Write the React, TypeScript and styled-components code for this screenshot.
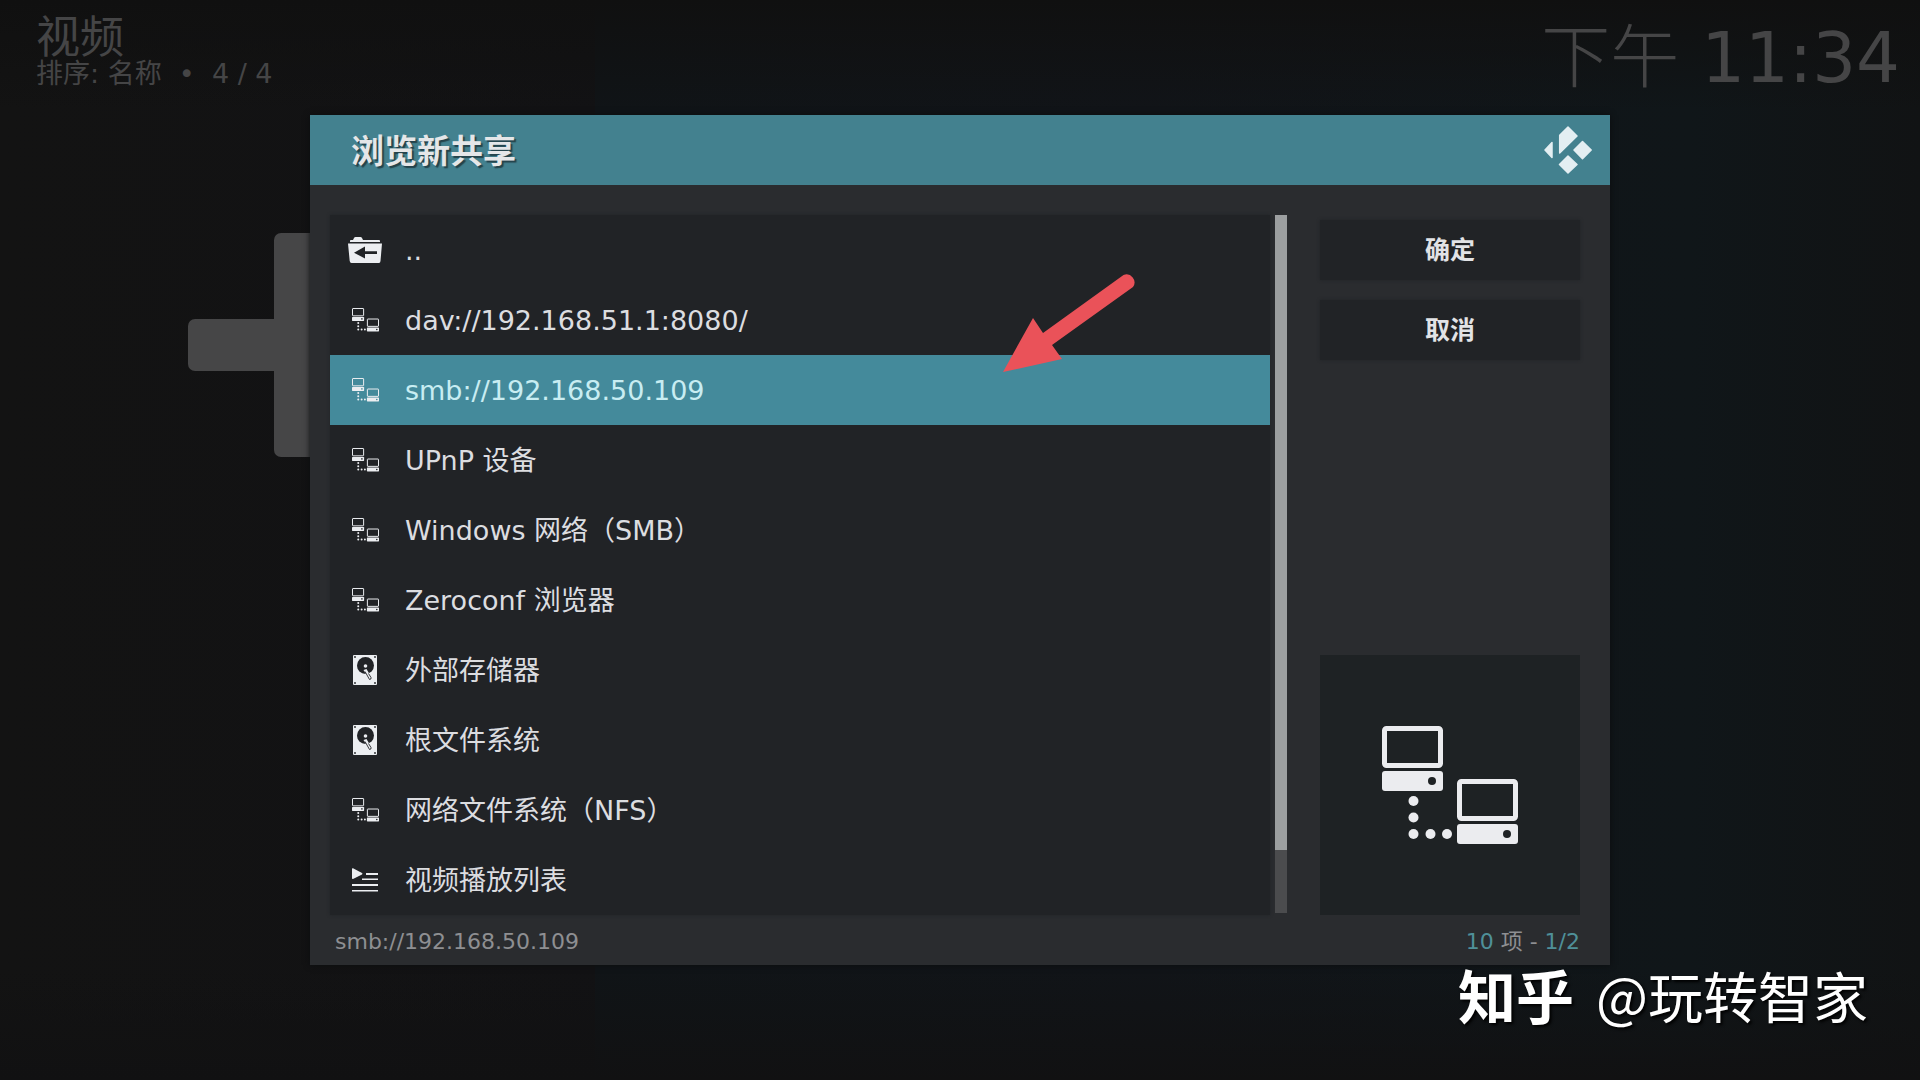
import React from 'react';
import styled, { createGlobalStyle } from 'styled-components';

const GlobalStyle = createGlobalStyle`
  *, *::before, *::after { box-sizing: border-box; }
  body {
    margin: 0;
    background: #121214;
    color: #dedfe1;
    font-family: "DejaVu Sans", "Noto Sans CJK SC", sans-serif;
  }
  button { font: inherit; color: inherit; border: 0; cursor: pointer; }
`;

const Screen = styled.div`
  position: relative;
  min-height: 100vh;
  overflow: hidden;
  background:
    linear-gradient(to bottom, #101010 0, #10101000 110px),
    linear-gradient(to top, #111112 0, #11111200 110px),
    linear-gradient(to right, #131313 0, #121214 31%, #101417 31%, #111418 60%, #101619 88%, #111314 100%);
`;

const TopBar = styled.header`
  display: flex;
  justify-content: space-between;
  align-items: flex-start;
  height: 100px;
  padding: 10px 20px 0 36px;
  color: #454546;
`;

const SectionTitle = styled.h1`
  margin: 0;
  padding-top: 4px;
  font-size: 44px;
  line-height: 48px;
  font-weight: 400;
`;

const SortInfo = styled.p`
  margin: 0;
  font-size: 27px;
  line-height: 24px;
  white-space: pre;
`;

const Clock = styled.time`
  font-size: 69px;
  line-height: 96px;
`;

const DayPeriod = styled.span`
  font-weight: 300;
`;

const Backdrop = styled.main`
  padding: 133px 188px 0;
`;

const Overlay = styled.div`
  position: absolute;
  inset: 0;
  padding: 115px 310px;
`;

const Dialog = styled.section`
  background: #2a2c2f;
  box-shadow: 0 0 6px #0b0d0f;
`;

const DialogHeader = styled.header`
  display: flex;
  align-items: center;
  justify-content: space-between;
  height: 70px;
  padding: 0 18px 0 41px;
  background: #43818f;
`;

const DialogTitle = styled.h2`
  margin: 0;
  padding-top: 4px;
  font-size: 33px;
  line-height: 66px;
  font-weight: 700;
  color: #e4e6e8;
  text-shadow: 2px 2px 1px #24434b;
`;

const DialogBody = styled.div`
  display: grid;
  grid-template-columns: minmax(0, 1fr) 50px 260px;
  padding: 30px 30px 0 20px;
`;

const List = styled.ul`
  margin: 0;
  padding: 0;
  list-style: none;
  background: #212326;
  box-shadow: 0 0 3px #212326;
`;

const Row = styled.button<{ $selected?: boolean }>`
  display: flex;
  align-items: center;
  gap: 20px;
  width: 100%;
  height: 70px;
  padding: 0 15px;
  text-align: left;
  font-size: 27px;
  line-height: 68px;
  background: ${(p) => (p.$selected ? '#448a9b' : 'transparent')};
  color: ${(p) => (p.$selected ? '#c8edf2' : '#dcdde0')};
`;

const RowLabel = styled.span`
  padding-top: 2px;
`;

const IconSlot = styled.span`
  display: flex;
  justify-content: center;
  align-items: center;
  width: 40px;
  height: 40px;
  color: #eceef1;
`;

const ScrollTrack = styled.div`
  width: 12px;
  margin: 0 0 2px 5px;
  background: #4b4c4e;
`;

const ScrollThumb = styled.div`
  height: 91%;
  background: #9c9fa0;
`;

const Side = styled.aside`
  display: flex;
  flex-direction: column;
  gap: 20px;
  padding-top: 5px;
`;

const ActionButton = styled.button`
  height: 60px;
  padding: 2px 0 0;
  background: #212326;
  box-shadow: 0 0 3px #212326;
  font-size: 25px;
  line-height: 58px;
  font-weight: 700;
  color: #e2e3e6;
`;

const Preview = styled.div`
  display: grid;
  place-items: center;
  height: 260px;
  margin-top: auto;
  background: #1e2224;
  color: #ebecef;
`;

const DialogFooter = styled.footer`
  display: flex;
  justify-content: space-between;
  padding: 4px 30px 0 25px;
  height: 50px;
  font-size: 22px;
  line-height: 46px;
  color: #8e8f92;
`;

const Accent = styled.span`
  color: #4f9099;
`;

const Pointer = styled.svg`
  position: absolute;
  top: 270px;
  left: 1000px;
`;

const Watermark = styled.div`
  position: absolute;
  right: 52px;
  bottom: 58px;
  display: flex;
  align-items: center;
  gap: 22px;
  font-family: "Noto Sans CJK SC", sans-serif;
  font-size: 55px;
  line-height: 56px;
  color: #ffffff;
  text-shadow: 2px 2px 3px #000000;
`;

const WatermarkBrand = styled.span`
  font-size: 58px;
  font-weight: 700;
`;

const NetworkIcon = ({ width, hole }: { width: number; hole: string }) => (
  <svg width={width} viewBox="0 0 136 118" fill="currentColor" aria-hidden="true">
    {[[0, 0], [75, 53]].map(([x, y]) => (
      <g key={x} transform={`translate(${x} ${y})`}>
        <rect x="2.5" y="2.5" width="56" height="37" rx="2" fill="none" stroke="currentColor" strokeWidth="5" />
        <rect y="45" width="61" height="20" rx="3" />
        <circle cx="50" cy="55" r="4" fill={hole} />
      </g>
    ))}
    {[[31.5, 75], [31.5, 91.5], [31.5, 108], [48.5, 108], [65, 108]].map(([x, y]) => (
      <circle key={`${x}-${y}`} cx={x} cy={y} r="5" />
    ))}
  </svg>
);

const FolderUpIcon = () => (
  <svg width="34" height="26" viewBox="0 0 34 26" fill="currentColor" aria-hidden="true">
    <path d="M2 5V3.5Q2 3 3 3H5L6 1Q6.5 0 7.500 0H12.500Q13.500 0 14 1L15 3H31Q32 3 32 4V5Z" />
    <path
      fillRule="evenodd"
      d="M0 6.500H34L32.500 24Q32.300 26 31 26H3.500Q2 26 1.700 24ZM6 15.700L17 9.500V14.300H29V17H17V21.500Z"
    />
  </svg>
);

const DriveIcon = ({ hole }: { hole: string }) => (
  <svg width="24" height="30" viewBox="0 0 24 30" aria-hidden="true">
    <rect width="24" height="30" rx="1" fill="currentColor" />
    <circle cx="12.500" cy="10.500" r="8.500" fill={hole} />
    <circle cx="12.500" cy="11" r="1.800" fill="currentColor" />
    <path d="M10.500 15L13.500 14L18.500 22.500Q18.500 25 16.500 25Z" fill="currentColor" />
    <path d="M12 16.500L16.500 24.500Q18.500 24.500 18 22.500L15.500 18.500" fill="none" stroke={hole} strokeWidth="0.9" />
    {[[2, 2], [22, 2], [2, 28], [22, 28]].map(([x, y]) => (
      <circle key={`${x}-${y}`} cx={x} cy={y} r="0.9" fill={hole} />
    ))}
  </svg>
);

const PlaylistIcon = () => (
  <svg width="26" height="24" viewBox="0 0 26 24" fill="currentColor" aria-hidden="true">
    <path d="M0 1Q0 0 1 0.300L10 5Q11 5.700 10 6.400L1 11Q0 11.300 0 10Z" />
    <path d="M14 5H26V7H14ZM10 10.500H26V12H10ZM0 16H26V18H0ZM0 22H26V23.500H0Z" />
  </svg>
);

const KodiLogo = () => (
  <svg width="48" height="48" viewBox="0 0 48 48" fill="#e3eef2" stroke="#e3eef2" strokeWidth="1.500" strokeLinejoin="round" aria-hidden="true">
    <path d="M24 1L33 10L15.700 27V9.300Z" />
    <path d="M38.500 15.500L47.200 24L38.500 32.700L30 24Z" />
    <path d="M24 30L33 38.500L24 47L15.500 38.500Z" />
    <path d="M8 16.500V31.500L1 24Z" />
  </svg>
);

type Kind = 'up' | 'network' | 'drive' | 'playlist';

const items: { kind: Kind; label: string; selected?: boolean }[] = [
  { kind: 'up', label: '..' },
  { kind: 'network', label: 'dav://192.168.51.1:8080/' },
  { kind: 'network', label: 'smb://192.168.50.109', selected: true },
  { kind: 'network', label: 'UPnP 设备' },
  { kind: 'network', label: 'Windows 网络（SMB）' },
  { kind: 'network', label: 'Zeroconf 浏览器' },
  { kind: 'drive', label: '外部存储器' },
  { kind: 'drive', label: '根文件系统' },
  { kind: 'network', label: '网络文件系统（NFS）' },
  { kind: 'playlist', label: '视频播放列表' },
];

const ItemIcon = ({ kind, hole }: { kind: Kind; hole: string }) => {
  if (kind === 'up') return <FolderUpIcon />;
  if (kind === 'drive') return <DriveIcon hole={hole} />;
  if (kind === 'playlist') return <PlaylistIcon />;
  return <NetworkIcon width={27} hole={hole} />;
};

export default function App() {
  return (
    <Screen lang="zh-CN">
      <GlobalStyle />
      <TopBar>
        <div>
          <SectionTitle>视频</SectionTitle>
          <SortInfo>{'排序: 名称  •  4 / 4'}</SortInfo>
        </div>
        <Clock>
          <DayPeriod>下午</DayPeriod> 11:34
        </Clock>
      </TopBar>
      <Backdrop>
        <svg width="224" height="224" viewBox="0 0 224 224" fill="#464647" aria-hidden="true">
          <rect x="86" width="52" height="224" rx="7" />
          <rect y="86" width="224" height="52" rx="7" />
        </svg>
      </Backdrop>
      <Overlay>
        <Dialog role="dialog" aria-labelledby="dialog-title">
          <DialogHeader>
            <DialogTitle id="dialog-title">浏览新共享</DialogTitle>
            <KodiLogo />
          </DialogHeader>
          <DialogBody>
            <List>
              {items.map((item) => (
                <li key={item.label}>
                  <Row type="button" $selected={item.selected}>
                    <IconSlot>
                      <ItemIcon kind={item.kind} hole={item.selected ? '#448a9b' : '#212326'} />
                    </IconSlot>
                    <RowLabel>{item.label}</RowLabel>
                  </Row>
                </li>
              ))}
            </List>
            <ScrollTrack>
              <ScrollThumb />
            </ScrollTrack>
            <Side>
              <ActionButton type="button">确定</ActionButton>
              <ActionButton type="button">取消</ActionButton>
              <Preview>
                <NetworkIcon width={136} hole="#1e2224" />
              </Preview>
            </Side>
          </DialogBody>
          <DialogFooter>
            <span>smb://192.168.50.109</span>
            <span>
              <Accent>10</Accent> 项 - <Accent>1/2</Accent>
            </span>
          </DialogFooter>
        </Dialog>
      </Overlay>
      <Pointer width="140" height="106" viewBox="0 0 140 106" fill="#ea5259" aria-hidden="true">
        <path d="M3 102L33 48L43 63L123.500 5A8 8 0 0 1 133 17L52 75L62 89Z" />
      </Pointer>
      <Watermark>
        <WatermarkBrand>知乎</WatermarkBrand>
        <span>@玩转智家</span>
      </Watermark>
    </Screen>
  );
}
